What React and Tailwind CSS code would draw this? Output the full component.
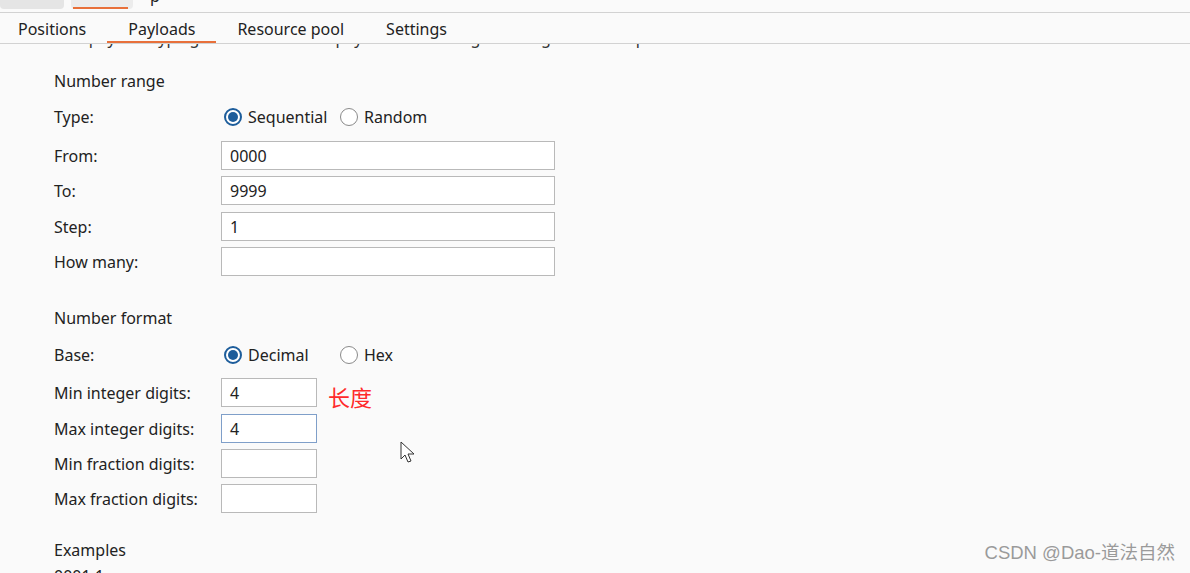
import React from "react"

const font = { fontFamily: '"Noto Sans", "Open Sans", "Liberation Sans", sans-serif' }

const Radio = ({ checked }) =>
  checked ? (
    <span className="flex h-[18px] w-[18px] items-center justify-center rounded-full border-2 border-[#1d5d9b] bg-white">
      <span className="h-[10px] w-[10px] rounded-full bg-[#1d5d9b]" />
    </span>
  ) : (
    <span className="h-[18px] w-[18px] rounded-full border border-[#8a8a8a] bg-white" />
  )

const Option = ({ checked, label, wide }) => (
  <div className={`flex items-center gap-[6px] pl-[3px] ${wide ? "w-[116px]" : ""}`}>
    <Radio checked={checked} />
    <span>{label}</span>
  </div>
)

const Field = ({ label, value, small, focused, mt }) => (
  <div className={`flex h-[29px] items-center ${mt}`}>
    <span className="w-[167px]">{label}</span>
    <div
      className={`flex h-[29px] items-center bg-white px-[8px] ${small ? "w-[96px]" : "w-[334px]"} ${
        focused ? "border border-[#7f9fc9]" : "border border-[#b9b9b9]"
      }`}
    >
      {value}
    </div>
  </div>
)

const Cursor = () => (
  <svg width="18" height="24" viewBox="0 0 18 24" className="absolute left-[400px] top-[441px]">
    <path
      d="M1 1 L1 18 L5 14 L8 21 L11 20 L8 13 L14 13 Z"
      fill="#ffffff"
      stroke="#333333"
      strokeWidth="1"
      strokeLinejoin="round"
    />
  </svg>
)

export default function App() {
  const tabs = ["Positions", "Payloads", "Resource pool", "Settings"]

  return (
    <div className="relative h-[573px] w-[1190px] overflow-hidden bg-[#fafafa] text-[16px] text-[#222]" style={font}>
      {/* top strip of outer tabs, mostly cut off */}
      <div className="flex h-[13px] items-start gap-[7px] overflow-hidden border-b border-[#d2d2d2]">
        <div className="h-[9px] w-[64px] rounded-b-[4px] bg-[#e5e5e5]" />
        <div className="flex h-[9px] w-[62px] flex-col justify-end rounded-b-[4px] bg-[#ececec] px-[2px]">
          <div className="h-[2px] w-[55px] bg-[#e8703a]" />
        </div>
        <div className="-mt-[14px] ml-[10px] leading-[20px]">p</div>
      </div>

      {/* inner tabs */}
      <div className="-ml-[3px] flex h-[31px] items-end border-b border-[#d2d2d2]">
        {tabs.map((t) => (
          <div key={t} className="flex flex-col">
            <div className="px-[21px] pb-[2px] leading-[20px]">{t}</div>
            <div className={`h-[2px] w-full ${t === "Payloads" ? "bg-[#e8703a]" : "bg-transparent"}`} />
          </div>
        ))}
      </div>

      {/* clipped description line */}
      <div className="h-[5px] overflow-hidden pl-[54px]">
        <div className="-mt-[16px] whitespace-nowrap leading-[20px] text-[#333]">
          This payload type generates numeric payloads within a given range and in a specified format.
        </div>
      </div>

      <div className="pl-[54px]">
        <div className="mt-[22px] h-[20px] leading-[20px]">Number range</div>

        <div className="mt-[11px] flex h-[30px] items-center">
          <span className="w-[167px]">Type:</span>
          <Option checked label="Sequential" wide />
          <Option label="Random" />
        </div>

        <Field label="From:" value="0000" mt="mt-[9px]" />
        <Field label="To:" value="9999" mt="mt-[6px]" />
        <Field label="Step:" value="1" mt="mt-[7px]" />
        <Field label="How many:" value="" mt="mt-[6px]" />

        <div className="mt-[32px] h-[20px] leading-[20px]">Number format</div>

        <div className="mt-[12px] flex h-[30px] items-center">
          <span className="w-[167px]">Base:</span>
          <Option checked label="Decimal" wide />
          <Option label="Hex" />
        </div>

        <div className="mt-[8px] flex h-[29px] items-start">
          <Field label="Min integer digits:" value="4" small />
          <span
            className="ml-[11px] mt-[5px] shrink-0 text-[22px] leading-[26px] text-[#ff2a2a]"
            style={{ fontFamily: '"Noto Sans CJK SC", sans-serif' }}
          >
            长度
          </span>
        </div>
        <Field label="Max integer digits:" value="4" small focused mt="mt-[7px]" />
        <Field label="Min fraction digits:" value="" small mt="mt-[6px]" />
        <Field label="Max fraction digits:" value="" small mt="mt-[6px]" />

        <div className="mt-[27px] h-[20px] leading-[20px]">Examples</div>
        <div className="mt-[6px] h-[20px] leading-[20px]">0001.1</div>
      </div>

      <Cursor />

      {/* watermark */}
      <div
        className="absolute right-[15px] top-[541px] text-[18.5px] leading-[24px] text-[#9a9a9a]"
        style={{ fontFamily: '"Liberation Sans", "Noto Sans CJK SC", sans-serif', textShadow: "0 0 1px #ffffff" }}
      >
        CSDN @Dao-道法自然
      </div>
    </div>
  )
}
